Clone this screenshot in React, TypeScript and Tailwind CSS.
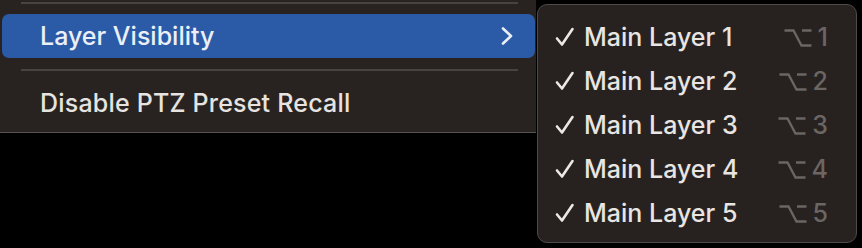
import React from "react";

const LAYERS = [1, 2, 3, 4, 5];

function Check() {
  return (
    <svg width="20" height="20" viewBox="0 0 20 20" className="shrink-0">
      <path d="M2 11.5 L7 17.5 L17.5 2" fill="none" stroke="#ebe8e5" strokeWidth="2.6" strokeLinecap="round" strokeLinejoin="round" />
    </svg>
  );
}

function OptionKey() {
  return (
    <svg width="28" height="18" viewBox="0 0 28 18" className="shrink-0">
      <path d="M0.5 1.5 H9.5 L17.5 16.5 H27.5 M18 1.5 H27.5" fill="none" stroke="#6b6663" strokeWidth="2.3" />
    </svg>
  );
}

function Chevron() {
  return (
    <svg width="12" height="18" viewBox="0 0 12 18">
      <path d="M2 1.5 L10 9 L2 16.5" fill="none" stroke="#e9edf6" strokeWidth="2.6" strokeLinecap="round" strokeLinejoin="round" />
    </svg>
  );
}

export default function App() {
  return (
    <div
      className="relative w-[862px] h-[248px] bg-black overflow-hidden text-[25px] font-medium"
      style={{ fontFamily: "Inter, 'Noto Sans', sans-serif" }}
    >
      {/* parent menu */}
      <div className="w-[536px] h-[133px] bg-[#282321] border-b border-[#57524f] flex flex-col">
        <div className="mt-[2px] ml-[21px] w-[497px] h-[2px] bg-[#48433f]" />
        <div className="mt-[10px] ml-[2px] w-[533px] h-[44px] rounded-[7px] bg-[#2b5ba6] flex items-center pl-[38px] pr-[22px] text-[#ebeff7]">
          <span className="flex-1 pt-[1px]">Layer Visibility</span>
          <Chevron />
        </div>
        <div className="mt-[11px] ml-[21px] w-[497px] h-[2px] bg-[#48433f]" />
        <div className="mt-[10px] h-[44px] flex items-center pl-[40px] pt-[1px] text-[#e6e3e0] tracking-[0.2px]">
          Disable PTZ Preset Recall
        </div>
      </div>

      {/* submenu */}
      <div className="absolute left-[537px] top-[4px] w-[320px] h-[239px] rounded-[10px] border border-[#4f4a47] bg-[#272220] pt-[10px] flex flex-col">
        {LAYERS.map((n) => (
          <div key={n} className="h-[44px] flex items-center pl-[17px] text-[#e8e5e2]">
            <Check />
            <span className="ml-[9px] flex-1 pt-[1px]">Main Layer {n}</span>
            <div className="flex items-center gap-[6px] pr-[28px] pt-[1px] text-[#6b6663]">
              <OptionKey />
              <span>{n}</span>
            </div>
          </div>
        ))}
      </div>
    </div>
  );
}
